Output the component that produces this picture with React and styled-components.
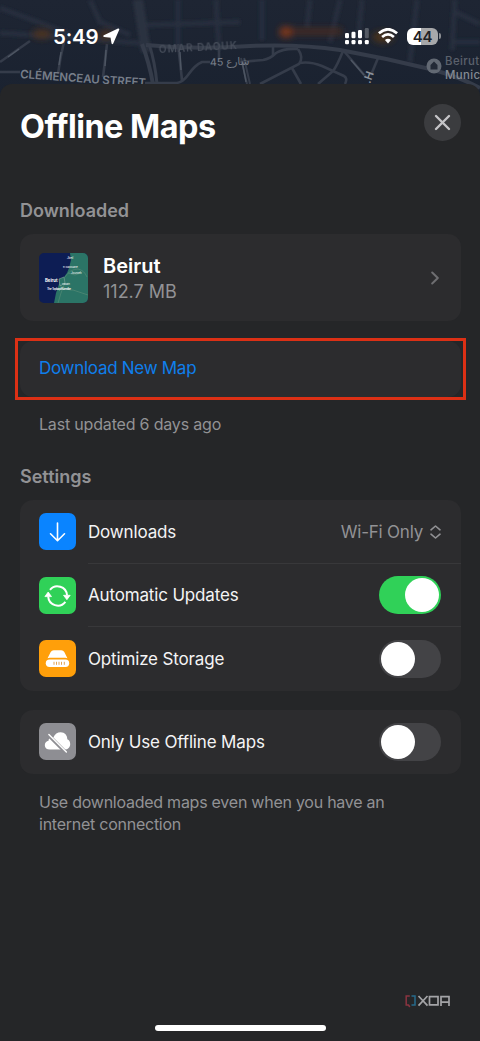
import React, { useState } from "react";
import styled, { createGlobalStyle, css } from "styled-components";

const GlobalStyle = createGlobalStyle`
* {
  box-sizing: border-box;
}
body {
  margin: 0;
  background: #1c2230;
  font-family: Inter, "Liberation Sans", sans-serif;
  color: #fff;
}
svg {
  display: block;
}
`;

const Screen = styled.div`
position: relative;
display: flex;
flex-direction: column;
width: 480px;
height: 1041px;
overflow: hidden;
background: #1d2431;
`;
const MapBackdrop = styled.svg`
position: absolute;
top: 0;
left: 0;
`;
const StatusBar = styled.header`
position: relative;
display: flex;
justify-content: space-between;
align-items: flex-start;
height: 84px;
padding: 25px 39px 0 53px;
`;
const StatusGroup = styled.div`
display: flex;
align-items: center;
gap: ${props => props.$gap};
height: 22px;
`;
const Time = styled.span`
font-size: 20.5px;
font-weight: 600;
letter-spacing: -0.2px;
`;
const Battery = styled.span`
display: flex;
align-items: center;
gap: 1px;
`;
const BatteryBody = styled.span`
width: 31px;
height: 17px;
border-radius: 6px;
background: linear-gradient(90deg, #fff 44%, #a7a8aa 44%);
color: #1d2026;
font-size: 15px;
font-weight: 600;
line-height: 17px;
letter-spacing: -0.3px;
text-align: center;
`;
const BatteryCap = styled.span`
width: 2px;
height: 6px;
border-radius: 0 2px 2px 0;
background: #8b8e93;
`;
const Sheet = styled.main`
position: relative;
flex: 1;
display: flex;
flex-direction: column;
padding: 20px 19px 10px 20px;
border-radius: 12px 12px 0 0;
background: #252628;
`;
const SheetHeader = styled.div`
display: flex;
justify-content: space-between;
height: 37px;
`;
const Title = styled.h1`
margin: 0;
padding-top: 3px;
font-size: 32.4px;
font-weight: 700;
line-height: 40px;
letter-spacing: -0.5px;
white-space: nowrap;
`;
const CloseButton = styled.button`
display: flex;
align-items: center;
justify-content: center;
width: 37px;
height: 37px;
padding: 0;
border: 0;
border-radius: 50%;
background: #3b3c3f;
`;
const SectionTitle = styled.h2`
margin: ${props => props.$top} 0 12px;
font-size: 18px;
font-weight: 600;
line-height: 22px;
letter-spacing: 0;
color: #929295;
`;
const Card = styled.section`
border-radius: 13px;
background: #2c2c2e;
${props => props.$top && css`margin-top: ${props.$top};`}
`;
const MapRow = styled.div`
display: flex;
align-items: center;
height: 87px;
padding: 0 22px 0 19px;
`;
const MapInfo = styled.div`
flex: 1;
padding: 2px 0 0 15px;
`;
const MapName = styled.div`
font-size: 20px;
font-weight: 600;
line-height: 26px;
`;
const MapSize = styled.div`
font-size: 18px;
line-height: 25px;
color: #929295;
`;
const Highlight = styled.div`
margin: 17px -5px 0;
padding: 0 2px;
border: 3px solid #dc3015;
`;
const LinkButton = styled.button`
display: block;
width: 100%;
height: 56px;
padding: 0 19px 2px 19px;
border: 0;
border-radius: 13px;
background: #2c2c2e;
color: #0f7fec;
font: 400 17px/22px Inter, "Liberation Sans", sans-serif;
letter-spacing: -0.28px;
text-align: left;
`;
const Note = styled.p`
margin: ${props => props.$top} 0 0 19px;
font-size: 16px;
line-height: 22px;
letter-spacing: ${props => props.$spacing};
color: #929295;
`;
const Row = styled.div`
display: flex;
align-items: stretch;
height: 63.5px;
padding-left: 19px;
`;
const IconTile = styled.div`
display: flex;
align-items: center;
justify-content: center;
align-self: center;
width: 37px;
height: 37px;
margin-right: 12px;
border-radius: 7px;
background: ${props => props.$color};
`;
const RowBody = styled.div`
flex: 1;
display: flex;
align-items: center;
justify-content: space-between;
padding-right: 20px;
${props => props.$divider && css`box-shadow: inset 0 -1px #38383a;`}
`;
const Label = styled.span`
font-size: 17px;
letter-spacing: -0.16px;
color: #f4f4f5;
`;
const Value = styled.span`
display: flex;
align-items: center;
gap: 7px;
font-size: 17px;
letter-spacing: -0.22px;
color: #929295;
`;
const Track = styled.button`
display: flex;
align-items: center;
justify-content: ${props => (props.$on ? "flex-end" : "flex-start")};
width: 62px;
height: 38px;
padding: 0 2px;
border: 0;
border-radius: 19px;
background: ${props => (props.$on ? "#30d158" : "#434346")};
`;
const Knob = styled.span`
width: 34px;
height: 34px;
border-radius: 50%;
background: #fff;
`;
const Footer = styled.footer`
display: flex;
flex-direction: column;
align-items: center;
margin-top: auto;
`;
const HomeIndicator = styled.div`
width: 171px;
height: 6px;
margin-top: 17px;
border-radius: 3px;
background: #fff;
`;
const Watermark = styled.div`
align-self: flex-end;
margin-right: 11px;
`;

const StreetMap = () => (
  <MapBackdrop width="480" height="100" viewBox="0 0 480 100" fill="none">
    <defs>
      <filter id="haze" x="-10%" y="-10%" width="120%" height="120%">
        <feGaussianBlur stdDeviation="1.8" />
      </filter>
      <filter id="soft">
        <feGaussianBlur stdDeviation="0.7" />
      </filter>
      <filter id="glow" x="-50%" y="-50%" width="200%" height="200%">
        <feGaussianBlur stdDeviation="3" />
      </filter>
      <linearGradient id="shade" x1="0" y1="0" x2="0" y2="1">
        <stop offset="0" stopColor="#1e2533" />
        <stop offset="1" stopColor="#1a2230" />
      </linearGradient>
    </defs>
    <rect width="480" height="100" fill="url(#shade)" />
    <g stroke="#272e3d" strokeWidth="5" filter="url(#haze)">
      <path d="M0 33 L50 36 L150 44" />
      <path d="M0 8 L70 34" />
      <path d="M138 0 L146 52" strokeWidth="10" stroke="#2b3241" />
      <path d="M147 25 L240 22" />
      <path d="M178 0 V50 M216 0 L219 50 M262 0 V40" />
      <path d="M310 0 L307 28 M340 0 L330 42 M362 0 L358 42" />
      <path d="M417 0 L410 62" />
      <path d="M455 0 L452 50 M455 12 L480 24 M455 42 H480" />
      <path d="M90 0 L100 22 L130 35" />
    </g>
    <g stroke="#353c4a" strokeWidth="2.6">
      <path d="M146 45 Q195 50 250 46 Q300 44 340 50 Q385 58 430 69 Q460 77 480 88" strokeWidth="4" />
      <path d="M0 62 L30 41" />
      <path d="M0 72 H20" />
      <path d="M64 42 Q60 58 58 74" />
      <path d="M107 44 Q105 62 103 77" />
      <path d="M142 44 Q149 62 153 84" strokeWidth="4" />
      <path d="M149 44 Q155 62 157 84" strokeWidth="3" />
      <path d="M178 44 L182 80" />
      <path d="M219 44 V60" />
      <path d="M145 83 H177 Q183 82 188 75 Q195 65 202 62 H210" />
      <path d="M240 62 L263 60 Q270 59 276 53 Q284 48 298 49" />
      <path d="M273 46 V56" />
      <path d="M298 49 Q304 58 299 64 L260 84" />
      <path d="M299 63 Q310 61 322 66 L344 76 Q348 78 345 84" />
      <path d="M292 68 L301 84" />
      <path d="M343 51 Q337 66 333 71 L318 84" />
      <path d="M343 50 L366 77" />
      <path d="M378 58 L371 75" />
      <path d="M241 58 L247 84 M244 58 L250 84" strokeWidth="2" />
    </g>
    <g stroke="#59616d" strokeWidth="1.5" opacity=".7">
      <path d="M8 57 L19 49 M61 52 L59 65 M106 50 L105 66 M180 52 L181 70 M242 61 L246 82 M351 60 L364 75" />
    </g>
    <g filter="url(#glow)">
      <ellipse cx="42" cy="34" rx="10" ry="5" fill="#4a3023" />
      <ellipse cx="106" cy="35" rx="7" ry="5" fill="#4c3323" />
      <ellipse cx="286" cy="32" rx="7" ry="6" fill="#74351f" />
      <rect x="292" y="28" width="50" height="7" fill="#432a24" />
      <ellipse cx="383" cy="37" rx="11" ry="6" fill="#47301d" />
    </g>
    <g fontFamily="Inter, sans-serif" fill="#777e89">
      <text x="20" y="78" fontSize="11.5" fontWeight="600" textLength="126" transform="rotate(4 20 78)">CLÉMENCEAU STREET</text>
      <text x="159" y="53" fontSize="10" fontWeight="600" fill="#464d5a" textLength="78" transform="rotate(-3 159 53)" filter="url(#soft)">OMAR DAOUK</text>
      <text x="210" y="66" fontSize="10.5" fontWeight="500" fill="#737a85" transform="rotate(-2 210 66)" style={{ fontFamily: 'Inter, "DejaVu Sans", sans-serif' }}>45 شارع</text>
      <text x="445" y="64.5" fontSize="11.4" fontWeight="500" letterSpacing=".4" fill="#5b616c">Beirut</text>
      <text x="445" y="78.5" fontSize="11.4" fontWeight="500" letterSpacing=".4" fill="#858b94">Munic</text>
      <text x="370" y="84" fontSize="11" fontWeight="600" fill="#8d939c" transform="rotate(-70 370 84)">.H</text>
    </g>
    <circle cx="434" cy="66" r="7.5" fill="#626973" />
    <path d="M430.5 65 L434 61.5 L437.5 65 V69.5 H430.5 Z" fill="#232a36" />
  </MapBackdrop>
);

const LocationArrow = () => (
  <svg width="17" height="17" viewBox="0 0 17 17">
    <path d="M15.4 1.4 L9.4 15.2 L8.3 8.9 L1.2 8 Z" fill="#fff" stroke="#fff" strokeWidth="1.8" strokeLinejoin="round" />
  </svg>
);

const Signal = () => (
  <svg width="24" height="17" viewBox="0 0 24 17" fill="#fff">
    <rect x="0" y="5" width="4" height="5.3" rx="1.2" />
    <rect x="6.5" y="3.8" width="4" height="6.5" rx="1.2" />
    <rect x="13" y="2" width="4" height="8.3" rx="1.2" />
    <rect x="19.8" y="0" width="4" height="10.3" rx="1.2" opacity=".25" />
    {[0, 6.5, 13, 19.8].map(x => (
      <rect key={x} x={x} y="12" width="4" height="4.3" rx="1.2" />
      ))}
  </svg>
);

const Wifi = () => (
  <svg width="20" height="16" viewBox="0 0 20 16" fill="none" stroke="#fff" strokeWidth="2.7">
    <path d="M0.9 5.3 Q10 -2.8 19.1 5.3" />
    <path d="M4.1 8.9 Q10 3.7 15.9 8.9" />
    <path d="M10 15.4 L6.9 12.1 Q10 9.5 13.1 12.1 Z" fill="#fff" stroke="none" />
  </svg>
);

const CloseIcon = () => (
  <svg width="17" height="17" viewBox="0 0 17 17" stroke="#c4c4c7" strokeWidth="2.4" strokeLinecap="round">
    <path d="M2 2 L15 15 M15 2 L2 15" />
  </svg>
);

const Thumbnail = () => (
  <svg width="49" height="50" viewBox="0 0 49 50">
    <defs>
      <clipPath id="thumb"><rect width="49" height="50" rx="5" /></clipPath>
    </defs>
    <g clipPath="url(#thumb)">
      <rect width="49" height="50" fill="#0d1d54" />
      <path d="M31 0 L32 7 L30 15 L28 20 L25 24 L20 26 L20 31 L17 40 L15 50 H49 V0 Z" fill="#2b7466" />
      <g fill="none" stroke="#5b8e78" strokeWidth=".6">
        <path d="M26 24 Q31 16 39 16 Q45 17 48 24 M29 20 L36 22 L42 20 M20 31 Q28 38 34 37 L49 42 M25 32 L22 40 L19 50" />
        <path d="M20 26 L25 24 L26 30 L21 33 Z" stroke="#82a29a" />
      </g>
      <g fill="#fff" fontFamily="Inter, sans-serif">
        <text x="6" y="29.3" fontSize="4.3" fontWeight="700">Beirut</text>
        <text x="8" y="36.5" fontSize="2.9" fontWeight="600" textLength="24">The Topkapi Kamrike</text>
        <text x="28" y="6" fontSize="2.8">Jbeil</text>
        <text x="24" y="14.5" fontSize="2.5">El Dakouane</text>
        <text x="32" y="20.5" fontSize="2.8">Jounieh</text>
        <text x="23" y="32" fontSize="2.3">Hadath</text>
      </g>
    </g>
  </svg>
);

const Chevron = () => (
  <svg width="8" height="14" viewBox="0 0 8 14" fill="none" stroke="#6e6e71" strokeWidth="2" strokeLinecap="round" strokeLinejoin="round">
    <path d="M1.2 1.5 L6.8 7 L1.2 12.5" />
  </svg>
);

const UpDown = () => (
  <svg width="11" height="14" viewBox="0 0 11 14" fill="none" stroke="#929295" strokeWidth="1.6" strokeLinecap="round" strokeLinejoin="round">
    <path d="M1 4.8 L5.5 1 L10 4.8 M1 9.2 L5.5 13 L10 9.2" />
  </svg>
);

const DownloadIcon = () => (
  <svg width="37" height="37" viewBox="0 0 37 37" fill="none" stroke="#fff" strokeWidth="1.6" strokeLinecap="round" strokeLinejoin="round">
    <path d="M18.5 10 V27.5 M11.5 20.8 L18.5 27.7 L25.5 20.8" />
  </svg>
);

const UpdatesIcon = () => (
  <svg width="37" height="37" viewBox="0 0 37 37" fill="none" stroke="#fff" strokeWidth="2">
    <path d="M11 12.8 A9.6 9.6 0 0 1 28 18" />
    <path d="M26.4 24.8 A9.6 9.6 0 0 1 9.2 19.5" />
    <path d="M24.5 18.3 H31.2 L27.9 22.7 Z M5.9 19.6 L9.2 15 L12.5 19.6 Z" fill="#fff" stroke="#fff" strokeWidth=".8" strokeLinejoin="round" />
  </svg>
);

const StorageIcon = () => (
  <svg width="37" height="37" viewBox="0 0 37 37" fill="#fff">
    <path d="M8.6 18.2 L11.7 12.1 Q12.7 10.3 14.7 10.3 H22.3 Q24.3 10.3 25.3 12.1 L28.4 18.2 Q27.5 17.8 26.3 17.8 H10.7 Q9.5 17.8 8.6 18.2 Z" />
    <rect x="6.8" y="19.5" width="23.4" height="7.5" rx="3.7" />
    <path d="M15 21.8 V24.8 M17.5 21.8 V24.8 M20 21.8 V24.8 M22.5 21.8 V24.8 M25.3 21.8 V24.8" stroke="#e2a456" strokeWidth="1" />
  </svg>
);

const CloudOffIcon = () => (
  <svg width="37" height="37" viewBox="0 0 37 37">
    <path d="M10.8 26.6 C7.8 26.6 5.8 24.7 5.8 22.2 C5.8 19.9 7.4 18.2 9.5 17.8 C9.5 15.2 12 13.6 14.4 14.5 C15.7 11 18.5 9.2 21.7 9.2 C25.8 9.2 28.4 12.5 28.3 16.2 C30.2 17 31.2 18.8 31.2 21 C31.2 24.2 28.8 26.6 25.7 26.6 Z" fill="#fff" />
    <path d="M8.8 11.5 L27.4 30" stroke="#8e8e93" strokeWidth="3.6" />
    <path d="M9.9 11.5 L27.4 29" stroke="#fff" strokeWidth="1.4" strokeLinecap="round" />
  </svg>
);

const XdaMark = () => (
  <svg width="45" height="13" viewBox="0 0 45 13" fill="none" strokeWidth="1.5">
    <path d="M4.8 1 H1.2 V10 H3.5 L4.8 12" stroke="#8b3440" />
    <path d="M6.5 1 H10 V10 H6.5" stroke="#266b8c" />
    <g stroke="#a4a4a7" strokeWidth="1.7">
      <path d="M13.5 1 L22.5 10.6 M22.5 1 L13.5 10.6" />
      <path d="M24.5 1.7 H33 V9.8 H24.5 Z" />
      <path d="M36 11 V1.7 H44 V11 M36 7.2 H44" />
    </g>
  </svg>
);

const Toggle = ({ defaultOn, label }) => {
  const [on, setOn] = useState(defaultOn);
  return (
    <Track $on={on} role="switch" aria-checked={on} aria-label={label} onClick={() => setOn(!on)}>
      <Knob />
    </Track>
  );
};

const SettingRow = ({ icon, color, label, divider, children }) => (
  <Row>
    <IconTile $color={color}>{icon}</IconTile>
    <RowBody $divider={divider}>
      <Label>{label}</Label>
      {children}
    </RowBody>
  </Row>
);

const App = () => (
  <>
    <GlobalStyle />
    <Screen>
      <StreetMap />
      <StatusBar>
        <StatusGroup $gap="5px">
          <Time>5:49</Time>
          <LocationArrow />
        </StatusGroup>
        <StatusGroup $gap="9px">
          <Signal />
          <Wifi />
          <Battery>
            <BatteryBody>44</BatteryBody>
            <BatteryCap />
          </Battery>
        </StatusGroup>
      </StatusBar>
      <Sheet>
        <SheetHeader>
          <Title>Offline Maps</Title>
          <CloseButton aria-label="Close"><CloseIcon /></CloseButton>
        </SheetHeader>

        <SectionTitle $top="59px">Downloaded</SectionTitle>
        <Card>
          <MapRow>
            <Thumbnail />
            <MapInfo>
              <MapName>Beirut</MapName>
              <MapSize>112.7 MB</MapSize>
            </MapInfo>
            <Chevron />
          </MapRow>
        </Card>
        <Highlight>
          <LinkButton>Download New Map</LinkButton>
        </Highlight>
        <Note $top="13px" $spacing="-0.18px">Last updated 6 days ago</Note>

        <SectionTitle $top="31px">Settings</SectionTitle>
        <Card>
          <SettingRow icon={<DownloadIcon />} color="#0a84ff" label="Downloads" divider>
            <Value>Wi-Fi Only <UpDown /></Value>
          </SettingRow>
          <SettingRow icon={<UpdatesIcon />} color="#30d158" label="Automatic Updates" divider>
            <Toggle defaultOn label="Automatic Updates" />
          </SettingRow>
          <SettingRow icon={<StorageIcon />} color="#ff9f0a" label="Optimize Storage">
            <Toggle defaultOn={false} label="Optimize Storage" />
          </SettingRow>
        </Card>
        <Card $top="19.5px">
          <SettingRow icon={<CloudOffIcon />} color="#8e8e93" label="Only Use Offline Maps">
            <Toggle defaultOn={false} label="Only Use Offline Maps" />
          </SettingRow>
        </Card>
        <Note $top="17.8px" $spacing="-0.25px">
          Use downloaded maps even when you have an
          <br />
          internet connection
        </Note>

        <Footer>
          <Watermark><XdaMark /></Watermark>
          <HomeIndicator />
        </Footer>
      </Sheet>
    </Screen>
  </>
);

export default App;
